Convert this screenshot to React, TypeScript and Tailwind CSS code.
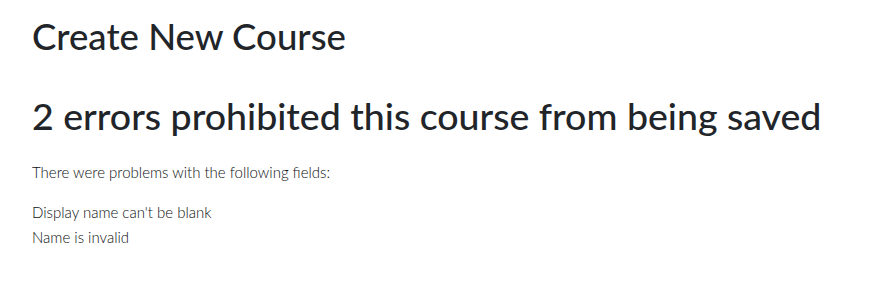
export default function App() {
  return (
    <div className="min-h-screen bg-white px-8 pt-[14px] text-[#212529]" style={{ fontFamily: 'Lato, "Noto Sans", sans-serif' }}>
      <h1 className="whitespace-nowrap text-[36.6px] font-medium leading-[44px]">Create New Course</h1>
      <div className="mt-[35px]">
        <h2 className="whitespace-nowrap text-[37.5px] font-medium leading-[46px]">2 errors prohibited this course from being saved</h2>
        <p className="mt-[21px] text-[15px] font-light leading-[24px] text-[#0d0f11]">There were problems with the following fields:</p>
        <ul className="mt-[16px] text-[15px] font-light leading-[25px] text-[#0d0f11]">
          <li>Display name can't be blank</li>
          <li>Name is invalid</li>
        </ul>
      </div>
    </div>
  );
}
